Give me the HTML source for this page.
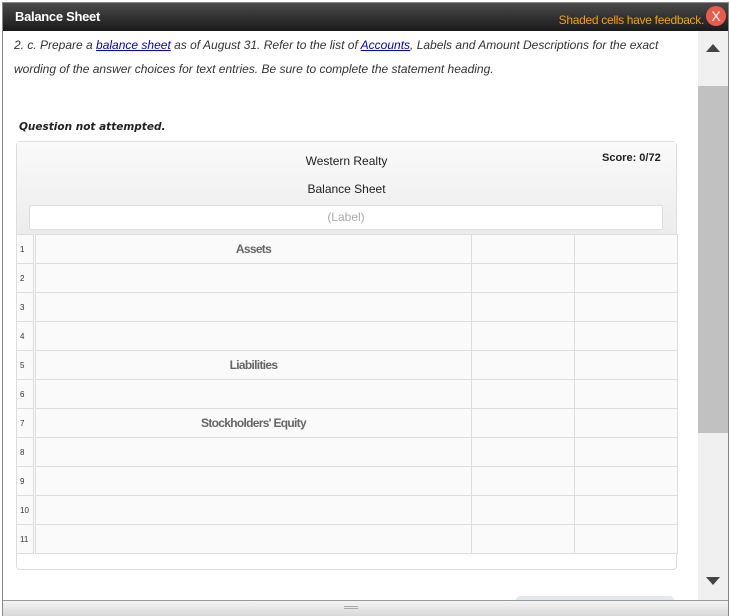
<!DOCTYPE html>
<html><head><style>
*{margin:0;padding:0;box-sizing:border-box}
body{width:730px;height:616px;overflow:hidden;background:#fff;font-family:"Liberation Sans",sans-serif;position:relative}
.win{position:absolute;left:2px;top:2px;width:727px;height:614px;border:1px solid #888;border-bottom:none}
.title{position:absolute;left:3px;top:3px;width:725px;height:28px;background:linear-gradient(#4a4a4a,#1a1a1a);color:#fff;font-size:13px;font-weight:bold;line-height:28px;padding-left:12px;letter-spacing:-.3px}
.fb{position:absolute;right:24px;top:10px;color:#f2a400;font-size:12px;font-weight:normal;line-height:14px}
.x{position:absolute;left:706px;top:6px;width:20px;height:20px;border-radius:50%;background:#e95b4b;color:#fff;font-size:14px;text-align:center;line-height:20px;font-weight:normal}
.q{position:absolute;left:14px;top:33px;font-size:12px;font-style:italic;color:#333;line-height:24px;width:680px}
.q a{color:#00c;text-decoration:underline}
.na{position:absolute;left:19px;top:121px;font-style:italic;font-weight:bold;color:#222;font-family:"DejaVu Sans",sans-serif;font-size:10.5px}
.sb{position:absolute;left:698px;top:31px;width:30px;height:569px;background:#f0f0f0}
.th{position:absolute;left:698px;top:86px;width:30px;height:347px;background:#c1c1c1}
.up{position:absolute;left:706px;top:44px;border:7px solid transparent;border-bottom:8px solid #444;border-top:none}
.dn{position:absolute;left:706px;top:577px;border:7px solid transparent;border-top:8px solid #444;border-bottom:none}
.bot{position:absolute;left:3px;top:600px;width:725px;height:16px;background:linear-gradient(#f4f4f4,#d8d8d8);border-top:1px solid #999}
.box{position:absolute;left:16px;top:141px;width:661px;height:429px;border:1px solid #ddd;border-radius:4px}
.hd{position:absolute;left:17px;top:142px;width:659px;height:92px;background:linear-gradient(#fafafa,#ececec)}
.t{position:absolute;font-size:12px;color:#222;text-align:center;width:659px;left:17px}
.lbl{position:absolute;left:29px;top:205px;width:634px;height:25px;background:#fff;border:1px solid #ddd;border-radius:2px;text-align:center;color:#aaa;font-size:12px;line-height:23px}
table{position:absolute;left:16px;top:234px;border-collapse:collapse;table-layout:fixed;width:661px}
td{height:29px;border:1px solid #ddd;background:#fafafa;font-size:12px;color:#666;text-align:center;font-weight:bold;letter-spacing:-.7px}
td.n{font-size:8px;font-weight:normal;color:#333;text-align:left;padding-left:3px;border-right:3px double #ddd;letter-spacing:0}
</style></head><body>
<div class="win"></div>
<div class="title">Balance Sheet<span class="fb">Shaded cells have feedback.</span></div>
<div class="x">X</div>
<div class="q">2. c. Prepare a <a>balance sheet</a> as of August 31. Refer to the list of <a>Accounts</a>, Labels and Amount Descriptions for the exact wording of the answer choices for text entries. Be sure to complete the statement heading.</div>
<div class="na">Question not attempted.</div>
<div class="sb"></div><div class="th"></div><div class="up"></div><div class="dn"></div>
<div class="box"></div>
<div class="hd"></div>
<div class="t" style="top:154px">Western Realty</div>
<div class="t" style="top:182px">Balance Sheet</div>
<div style="position:absolute;left:602px;top:152px;font-size:11px;font-weight:bold;color:#222">Score: 0/72</div>
<div class="lbl">(Label)</div>
<table>
<colgroup><col style="width:18px"><col style="width:437px"><col style="width:103px"><col style="width:103px"></colgroup>
<tr><td class="n">1</td><td>Assets</td><td></td><td></td></tr>
<tr><td class="n">2</td><td></td><td></td><td></td></tr>
<tr><td class="n">3</td><td></td><td></td><td></td></tr>
<tr><td class="n">4</td><td></td><td></td><td></td></tr>
<tr><td class="n">5</td><td>Liabilities</td><td></td><td></td></tr>
<tr><td class="n">6</td><td></td><td></td><td></td></tr>
<tr><td class="n">7</td><td>Stockholders' Equity</td><td></td><td></td></tr>
<tr><td class="n">8</td><td></td><td></td><td></td></tr>
<tr><td class="n">9</td><td></td><td></td><td></td></tr>
<tr><td class="n">10</td><td></td><td></td><td></td></tr>
<tr><td class="n">11</td><td></td><td></td><td></td></tr>
</table>
<div style="position:absolute;left:516px;top:596px;width:158px;height:5px;background:#e4e8ec;border-radius:4px 4px 0 0"></div>
<div class="bot"></div>
<div style="position:absolute;left:344px;top:606px;width:14px;height:3px;border-top:1px solid #aaa;border-bottom:1px solid #aaa"></div>
</body></html>
